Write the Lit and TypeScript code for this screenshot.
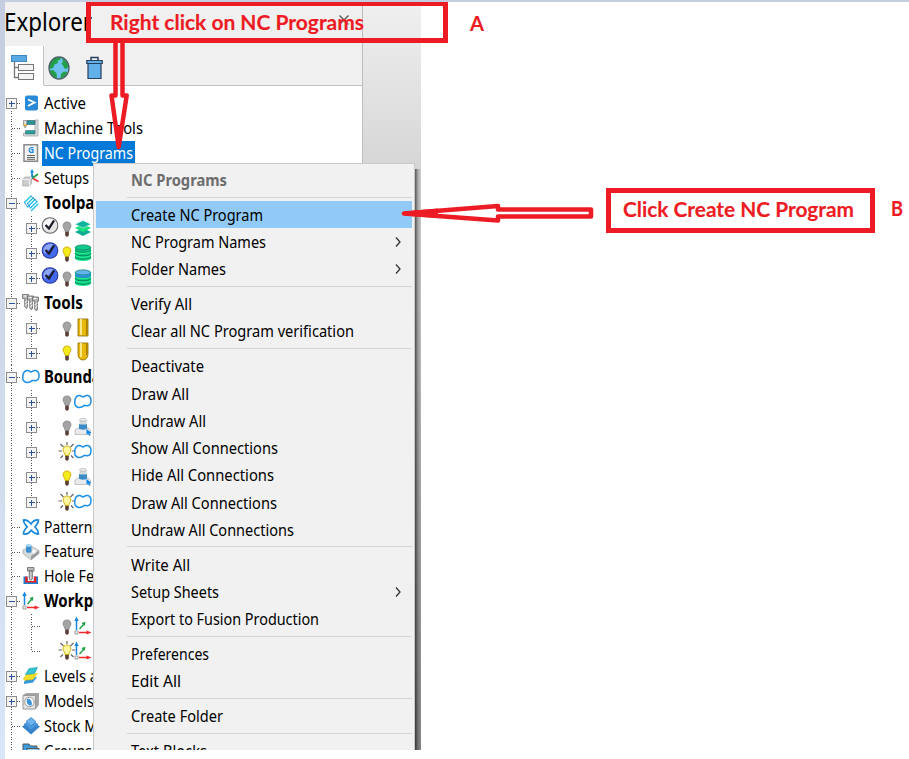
import { LitElement, html, svg, css, nothing } from "lit";
import { customElement } from "lit/decorators.js";

type Opt = { size?: number; bold?: boolean; cls?: string; h?: number; base?: number };

// One line of text condensed to an exact advance width.
const label = (s: string, w: number, o: Opt = {}) => {
  const h = o.h ?? 24;
  return html`<svg class="txt ${o.cls ?? ""}" width=${w} height=${h} viewBox="0 0 ${w} ${h}">
    <text x="0" y=${o.base ?? 18} font-size=${o.size ?? 17} font-weight=${o.bold ? 700 : 400}
      textLength=${w} lengthAdjust="spacingAndGlyphs">${s}</text></svg>`;
};

const cloud = svg`<path d="M4.500 14.500C1.800 14 .5 11.500.8 8.500 1 5 2.500 2.800 5 2.500c1.800-.2 2.600.9 4 1.600C10.500 3.200 11.800 2 13.700 2.500c1.800.5 3.400 2.200 3.300 5 0 2.800-1.300 4.900-3.200 5.200-1.500.2-2.400-.6-3.600-.2-1.500.6-2.700 2.500-5.700 2z" fill="#fff" stroke="#1d8fe8" stroke-width="1.500"/>`;
const axes = svg`<path d="M2.500 13V3" stroke="#1787e0" stroke-width="1.500"/><path d="M.3 4L2.500-.5l2.200 4.500z" fill="#1787e0"/><path d="M5 15.500h9" stroke="#f02a2a" stroke-width="1.500"/><path d="M12.500 13.500l5 2-5 2z" fill="#f02a2a"/><path d="M5.500 12l4.500-5" stroke="#1fa045" stroke-width="1.400"/><path d="M7.500 6l4-1.300-.8 4.300z" fill="#1fa045"/><rect x="1" y="14" width="3" height="3" fill="#eee" stroke="#999" stroke-width=".9"/>`;
const cutter = (x: number, y: number) => svg`<g transform="translate(${x} ${y})"><path d="M0 0h6v4H5v8L4 14 2.200 12V4H0z" fill="#b5b5b5" stroke="#666" stroke-width=".8"/><path d="M1 1.500h3M2.500 8l2.500-2M2.500 11l2.500-2" stroke="#fff"/></g>`;
const db = (top: string) => svg`<path d="M1 3v11c0 3.500 16 3.500 16 0V3z" fill="#0fc97d"/><g fill="none" stroke="#06845f" stroke-width="1"><path d="M1 6c1 3 15 3 16 0M1 9.500c1 3 15 3 16 0M1 13c1 3 15 3 16 0"/></g><g fill="none" stroke="#24f49a"><path d="M1 7.200c1 3 15 3 16 0M1 11c1 3 15 3 16 0M1 14.200c1 3 15 3 16 0"/></g><ellipse cx="9" cy="3.500" rx="7.700" ry="2.600" fill=${top} stroke="#087f68" stroke-width=".8"/>`;

const ICONS: Record<string, unknown> = {
  active: svg`<rect x="3" y="1.500" width="13" height="15" rx="2" fill="#2b8ad8"/><path d="M6 5.500l6.500 3L6 12" fill="none" stroke="#fff" stroke-width="1.900"/>`,
  machine: svg`<path d="M13 1h3v16H1.500v-3H13z" fill="#dadcdc" stroke="#9aa" stroke-width=".8"/><path d="M5 1.500h8v4H5z" fill="#28968f" stroke="#246" stroke-width=".5"/><path d="M3.500 11.500H13v3.500H3.500z" fill="#2ba098" stroke="#246" stroke-width=".4"/><path d="M1.500 1.500h3.200V6L3.200 9 1.500 6z" fill="#ddd" stroke="#888" stroke-width=".8"/><path d="M1.500 5.500h3v1.500h-3z" fill="#e6a817"/>`,
  nc: svg`<rect x="2" y=".8" width="13.500" height="16.500" fill="#f3f3f3" stroke="#888" stroke-width="1.500"/><text x="6" y="9" font-size="8.500" font-weight="700" fill="#1787e0">G</text><path d="M5 11.500h8M5 13.500h8M5 15.300h8" stroke="#555" stroke-width=".9"/>`,
  setups: svg`<path d="M10 9.500l6-4.500M10 5l1 4" stroke-width="1.600" stroke="#1fa045"/><path d="M10 9V2" stroke="#1787e0" stroke-width="1.600"/><path d="M8 3.500L10 0l2 3.500z" fill="#1787e0"/><path d="M11 9.500l5.500 3" stroke="#e33" stroke-width="1.700"/><path d="M.8 10.500l2-2.500H9.500v6.500l-2 2.500H.8z" fill="#cdcdcd" stroke="#a5a5a5" stroke-width=".7"/><path d="M.8 10.500h6.700V17M7.500 10.500l2-2.500" fill="none" stroke="#eee"/>`,
  toolpaths: svg`<g stroke="#25c0e8" stroke-width="1.400" fill="none" stroke-linecap="round"><path d="M2.500 8.500L9 2M5.500 9.500L11 4M5.500 13L13 5.500M8.500 14L15 7.500M9.500 16.500L16 10"/></g><g stroke="#1e8fd6" stroke-width=".9" fill="none"><path d="M2.500 8.500l3 4.500M5.500 9.500l3 4.500M9 2l4 3.500M11 4l4 3.500"/></g>`,
  tools: svg`${cutter(.5, .5)}${cutter(5.500, 2)}${cutter(10.500, 3)}`,
  cloud,
  pattern: svg`<path d="M1.500 2c3.200-.5 4.800.7 7.500 4 2-3 4-4.500 7.500-4 .2 3-1.800 4.500-3.500 7 1.900 2 3.600 3.500 3.500 7-3.200.3-4.900-1-7.300-3.700C7.500 15 5 16.500 1.500 16c-.3-3 1.700-5 3.700-7C3.200 6.800 1.500 5.500 1.500 2z" fill="#fff" stroke="#1787e0" stroke-width="1.700"/>`,
  feature: svg`<path d="M1 7l8-4 8 4.500v3L9 17l-8-6.500z" fill="#d6d9da" stroke="#a5a5a5" stroke-width=".7"/><path d="M9 13l8-5.500v3L9 17z" fill="#989c9e"/><path d="M4 2.500v6c0 1.800 5.500 1.800 5.500 0v-6z" fill="#3c8fd0"/><ellipse cx="6.750" cy="2.500" rx="2.750" ry="1.500" fill="#9cd0f2"/><circle cx="12" cy="8.500" r="2" fill="#f8f8f8"/>`,
  hole: svg`<path d="M1.500 9.500h14.500V17H1.500z" fill="#1d7fd0"/><path d="M5.500 9.500h6.500l-.5 5h-5.500z" fill="#fff"/><path d="M3.200 9.500h2.300V14h6.500V9.500h2.300v6H3.200z" fill="#e22"/><path d="M5.500 .5h6.500v3.500H5.500z" fill="#bbb" stroke="#666" stroke-width=".8"/><path d="M7.300 4h3v8l-1.500 1.500L7.300 12z" fill="#ccc" stroke="#555" stroke-width=".8"/>`,
  axes,
  levels: svg`<path d="M2 15l3-4 10-1-4 5.500L2 17z" fill="#3598d8"/><path d="M1.500 11.500l3-4L15.500 6.500l-4.500 6-9 .8z" fill="#f3df2a" stroke="#d8b800" stroke-width=".5"/><path d="M4 6.500L7 1.500 15.500.5l-3 6-9 1z" fill="#35c4d2" stroke="#1697ae" stroke-width=".6"/>`,
  models: svg`<path d="M1 3l3-2h13v12l-3 4H1z" fill="#a5a5a5"/><path d="M1 3.500h12.500V17H1z" fill="#e2e2e2" stroke="#999"/><circle cx="7.500" cy="10" r="4.700" fill="#fff" stroke="#999"/><path d="M5 7c3-1 6 3 4.500 6.500C6 14 4 11 5 7z" fill="#3c93d6"/>`,
  stock: svg`<path d="M9 4l9 5.500-9 8-9-8z" fill="#3683c9"/><path d="M9 2.500l7 5L9 13 2 7.500z" fill="#4c9ade" stroke="#2f7ec4" stroke-width=".7"/><path d="M9 .5l5 4-5 4.500-5-4.500z" fill="#6db3ee" stroke="#3584ca" stroke-width=".7"/>`,
  groups: svg`<path d="M1 2h6l1.500 2H15v12H1z" fill="#3d9be0" stroke="#555"/><path d="M5 6.500h12V16H5z" fill="#9fd0f5" stroke="#555"/>`,
  layers: svg`<path d="M9 9l8 4-8 4L1 13z" fill="#0fae94"/><path d="M9 5l8 4-8 4-8-4z" fill="#15e07c"/><path d="M9 1.500l8 3.700L9 9 1 5.200z" fill="#0fb49c" stroke="#fff" stroke-width=".5"/>`,
  dbGreen: db("#13c98b"),
  dbBlue: svg`${db("#63b5ee")}<path d="M1.300 4v3c1 2.500 14.400 2.500 15.400 0V4c-2 3-13.400 3-15.400 0z" fill="#2d8fd8"/>`,
  endmill: svg`<path d="M4 0h10v17H4z" fill="#e8b90c" stroke="#8a6a00" stroke-width=".8"/><path d="M6 0h2v16H6z" fill="#fbe88a"/><path d="M12 0h1.500v16H12z" fill="#a87c00"/>`,
  ballmill: svg`<path d="M4 0h10v11c0 8-10 8-10 0z" fill="#e8b90c" stroke="#8a6a00" stroke-width=".8"/><path d="M6 0h2v14H6z" fill="#fbe88a"/><path d="M12 0h1.500v12H12z" fill="#a87c00"/>`,
  block: svg`<path d="M1 12l3-2h10l2.500 2v4.500H1z" fill="#e8eaec" stroke="#b5b5b5" stroke-width=".8"/><path d="M5 6v4.500c0 1.500 8 1.500 8 0V6z" fill="#3a8cc9"/><path d="M5.500 2v4.500h7V2z" fill="#d4d8da"/><ellipse cx="9" cy="1.800" rx="3.500" ry="1.400" fill="#eef0f1" stroke="#aaa" stroke-width=".6"/><path d="M12.500 11l5 4-2.200.2 1.200 2.200-1.300.4-1.200-2.200-1.500 1.200z" fill="#0b84e6"/>`,
};
const icon = (n: string, cls = "ico") => html`<svg class=${cls} width="18" height="18" viewBox="0 0 18 18">${ICONS[n]}</svg>`;

const bulb = (kind: string) => html`<svg class="bulb" width="18" height="20" viewBox="0 0 18 20">
  ${kind === "rays" ? svg`<g stroke="#666" stroke-width="1.200"><path d="M9 0v3M2.500 2l3 3M15.500 2L12.500 5M.5 9h3.500M14 9h3.500M2.500 16L5 13.500M15.500 16L13 13.500"/></g>` : nothing}
  <path d="M7.200 12h3.600v5.500L9 19l-1.800-1.500z" fill="#5a3d35"/>
  <path d="M9 4c2.400 0 3.900 1.500 3.900 3.800S11 11 10.800 13.500H7.200C7 11 5.100 10.100 5.100 7.800S6.600 4 9 4z" fill=${kind === "off" ? "#a3a3a3" : kind === "on" ? "#f5ea1c" : "#fff7a0"} stroke=${kind === "off" ? "#868686" : "#c9a800"} stroke-width=".9"/></svg>`;

const check = (on: boolean) => html`<svg class="chk" width="18" height="20" viewBox="0 0 18 20">
  <circle cx="9" cy="8.500" r="7.800" fill=${on ? "#4468ee" : "#e6e6e6"} stroke=${on ? "#26379a" : "#666"} stroke-width="1.100"/>
  <path d="M2.500 9.500a7 7 0 0 1 10-7L4 12z" fill="#fff" opacity=${on ? ".4" : ".8"}/>
  <path d="M4.500 8L8 11.500l5-8" fill="none" stroke="#1b1b2a" stroke-width="2.300"/></svg>`;

interface Row { t?: string; w?: number; i: string; b?: boolean; x?: "+" | "-"; child?: boolean; last?: boolean; bulb?: string; chk?: boolean; sel?: boolean; short?: boolean }
const ROWS: Row[] = [
  { t: "Active", w: 42, i: "active", x: "+" },
  { t: "Machine Tools", w: 99, i: "machine" },
  { t: "NC Programs", w: 89, i: "nc", sel: true },
  { t: "Setups", w: 45, i: "setups" },
  { t: "Toolpaths", w: 75, i: "toolpaths", b: true, x: "-" },
  { i: "layers", child: true, x: "+", bulb: "off", chk: false },
  { i: "dbGreen", child: true, x: "+", bulb: "on", chk: true },
  { i: "dbBlue", child: true, x: "+", bulb: "off", chk: true, last: true },
  { t: "Tools", w: 39, i: "tools", b: true, x: "-" },
  { i: "endmill", child: true, x: "+", bulb: "off" },
  { i: "ballmill", child: true, x: "+", bulb: "on", last: true, short: true },
  { t: "Boundaries", w: 84, i: "cloud", b: true, x: "-" },
  { i: "cloud", child: true, x: "+", bulb: "off" },
  { i: "block", child: true, x: "+", bulb: "off" },
  { i: "cloud", child: true, x: "+", bulb: "rays" },
  { i: "block", child: true, x: "+", bulb: "on" },
  { i: "cloud", child: true, x: "+", bulb: "rays", last: true },
  { t: "Patterns", w: 55, i: "pattern" },
  { t: "Features", w: 57, i: "feature", short: true },
  { t: "Hole Fea", w: 58, i: "hole" },
  { t: "Workplanes", w: 89, i: "axes", b: true, x: "-" },
  { i: "axes", child: true, bulb: "off" },
  { i: "axes", child: true, bulb: "rays", last: true },
  { t: "Levels an", w: 63, i: "levels", x: "+" },
  { t: "Models", w: 50, i: "models", x: "+" },
  { t: "Stock Mo", w: 62, i: "stock" },
  { t: "Groups", w: 48, i: "groups" },
];

const lines = (r: Row, first: boolean) => {
  const w = r.child ? 37 : 17, cx = r.child ? 26.5 : 6.5;
  return html`<svg class="lines" width=${w} height="25" viewBox="0 0 ${w} 25">
    <g stroke="#555" stroke-dasharray="1 1.500" fill="none">
      <path d="M6.500 ${first ? 12 : 0}V25"/>
      ${r.child ? svg`<path d="M26.500 0V${r.last ? 12 : 25}"/>` : nothing}
      <path d="M${cx} 12.500H${w}"/>
    </g>
    ${r.x ? svg`<rect x=${cx - 5} y="7.500" width="10" height="10" fill="#f4f4f4" stroke="#8d8d8d"/>
      <path d="M${cx - 3} 12.500h6${r.x === "+" ? "m-3 -3v6" : ""}" stroke="#2d4fa0" fill="none"/>` : nothing}
  </svg>`;
};

type Item = { t: string; w: number; sub?: boolean; hot?: boolean } | null;
const MENU: Item[] = [
  { t: "Create NC Program", w: 132, hot: true },
  { t: "NC Program Names", w: 135, sub: true },
  { t: "Folder Names", w: 95, sub: true },
  null,
  { t: "Verify All", w: 61 },
  { t: "Clear all NC Program verification", w: 223 },
  null,
  { t: "Deactivate", w: 73 },
  { t: "Draw All", w: 58 },
  { t: "Undraw All", w: 75 },
  { t: "Show All Connections", w: 147 },
  { t: "Hide All Connections", w: 143 },
  { t: "Draw All Connections", w: 146 },
  { t: "Undraw All Connections", w: 163 },
  null,
  { t: "Write All", w: 59 },
  { t: "Setup Sheets", w: 88, sub: true },
  { t: "Export to Fusion Production", w: 188 },
  null,
  { t: "Preferences", w: 78 },
  { t: "Edit All", w: 50 },
  null,
  { t: "Create Folder", w: 92 },
  null,
  { t: "Text Blocks", w: 76 },
];

@customElement("context-menu")
export class ContextMenu extends LitElement {
  static styles = css`
    :host { display: block; box-sizing: border-box; width: 322px; height: 600px; padding-top: 2.400px; background: #f1f1f1;
      border: 1px solid #c9c9c9; font-family: "Noto Sans", "Open Sans", sans-serif; }
    svg { display: block; overflow: visible; }
    .item { height: 27.250px; margin: 0 2px; padding-left: 35px; display: flex; align-items: center; fill: #000; }
    .hot { background: #91c9f7; }
    .title { fill: #6d6d6d; }
    .sep { height: 7.600px; padding: 3px 2px 0 33px; box-sizing: border-box; }
    .sep::before { content: ""; display: block; height: 1px; background: #d4d4d4; }
    .arrow { margin-left: auto; margin-right: 11px; }
  `;
  render() {
    return html`
      <div class="item title">${label("NC Programs", 96, { bold: true, size: 16.5 })}</div>
      <div class="sep"></div>
      ${MENU.map((m) => m
        ? html`<div class="item ${m.hot ? "hot" : ""}">${label(m.t, m.w, { base: 18.45 })}
            ${m.sub ? html`<svg class="arrow" width="6" height="12"><path d="M1 1.500l4 4.500-4 4.500" fill="none" stroke="#333" stroke-width="1.300"/></svg>` : nothing}</div>`
        : html`<div class="sep"></div>`)}`;
  }
}

@customElement("app-root")
export class AppRoot extends LitElement {
  static styles = css`
    :host { display: block; box-sizing: border-box; position: relative; width: 909px; height: 759px; overflow: hidden;
      background: #fff; font-family: "Noto Sans", "Open Sans", sans-serif; }
    svg { display: block; overflow: visible; flex: none; }
    .window { display: grid; grid-template-columns: 5px 1fr; grid-template-rows: 2px 1fr; height: 759px; }
    .top { grid-column: 1 / 3; background: #c5cee0; }
    .edge { background: linear-gradient(#c5cee0, #d9e6f7); }
    .client { display: flex; height: 748px; overflow: hidden; }
    .panel { width: 357px; border-right: 1px solid #bdbdbd; background: #fff; flex: none; }
    .back { width: 58px; background: linear-gradient(#f0f0f0, #d6d6d6 22%, #8a8a8a); flex: none; }
    .head { height: 44px; background: #f0f0f0; display: flex; justify-content: space-between; }
    .head .txt { margin-left: -1px; }
    .close { margin: 13px 13px 0 0; }
    .tabs { height: 40px; box-sizing: border-box; background: #f0f0f0; display: flex; }
    .tab { box-sizing: border-box; padding-top: 4px; display: flex; align-items: center; justify-content: center; border-bottom: 1px solid #c2c2c2; }
    .tab.on { width: 39px; padding-right: 2px; background: #fff; border-right: 1px solid #c2c2c2; border-bottom-color: #fff; }
    .tab.web { width: 29px; }
    .tab.bin { width: 43px; }
    .tab.fill { flex: 1; }
    .tree { padding-top: 5px; }
    .row { height: 25px; display: flex; align-items: center; overflow: hidden; }
    .row.short { height: 24px; }
    .lines { align-self: flex-start; shape-rendering: crispEdges; }
    .ico { margin: -1px 2px 0 0; }
    .name { height: 24px; padding: 0 2px; }
    .name.sel { background: #0078d7; fill: #fff; height: 25px; }
    .slot { width: 18px; margin-left: -1px; }
    .chk { margin-top: -4px; margin-left: -1px; }
    .bulb { margin: -2px -2px 0 -1px; }
    .bulb + .ico { margin-top: -2px; }
    .menu { position: absolute; left: 93px; top: 163px; width: 328px; height: 587px; overflow: hidden; }
    .menu::after { content: ""; position: absolute; left: 322px; top: 6px; width: 6px; bottom: 0;
      background: linear-gradient(90deg, rgba(0,0,0,.6), rgba(0,0,0,.2) 50%, rgba(0,0,0,.01)); }
    .note, .letter { position: absolute; fill: #ed1c24; stroke: #ed1c24; stroke-width: .15px; font-family: Lato, "Open Sans", sans-serif; }
    .note { box-sizing: border-box; border: 5px solid #ed1c24; }
    .a { left: 86px; top: 2px; width: 362px; height: 41px; border-top-width: 4px; padding: 4px 0 0 19px; }
    .b { left: 606px; top: 188px; width: 269px; height: 45px; padding: 4px 0 0 12px; }
    .la { left: 470px; top: 10px; }
    .lb { left: 891px; top: 195px; }
    .arrows { position: absolute; left: 0; top: 0; pointer-events: none; }
  `;

  private row(r: Row, i: number) {
    return html`<div class="row ${r.short ? "short" : ""}">
      ${lines(r, i === 0)}
      ${r.child
        ? html`${r.chk === undefined ? html`<span class="slot"></span>` : check(r.chk)}${bulb(r.bulb!)}${icon(r.i)}`
        : html`${icon(r.i)}<div class="name ${r.sel ? "sel" : ""}">${label(r.t!, r.w!, { bold: r.b, base: r.sel ? 18 : 16.9 })}</div>`}
    </div>`;
  }

  render() {
    return html`
      <div class="window">
        <div class="top"></div>
        <div class="edge"></div>
        <div class="client">
          <div class="panel">
            <div class="head">
              ${label("Explorer", 88, { size: 26, h: 40, base: 29 })}
              <svg class="close" width="10" height="10"><path d="M.5.5l9 9M9.500.5l-9 9" stroke="#555" stroke-width="1.400"/></svg>
            </div>
            <div class="tabs">
              <div class="tab on"><svg width="24" height="26" viewBox="0 0 24 26">
                <path d="M3.500 7v15.500H8M3.500 12.500H8" fill="none" stroke="#777" stroke-width="1.300"/>
                <rect x=".5" y=".5" width="15" height="6" fill="#5ba9e2" stroke="#3f88bf"/>
                <rect x="7.500" y="9.500" width="15" height="6" fill="#f5f5f5" stroke="#777"/>
                <rect x="7.500" y="18.500" width="15" height="6" fill="#f5f5f5" stroke="#777"/></svg></div>
              <div class="tab web"><svg width="22" height="24" viewBox="0 0 22 24">
                <ellipse cx="11" cy="12" rx="10" ry="11" fill="#6fc1ef"/>
                <path d="M5 3c2-1.500 5-2 8-1.500L12 4 9.500 4.500 10 7 6.500 8.500 5 12 2 13 1 12C1 8 2.500 5 5 3zM14 2.500c4 1.500 6 5 6.500 8.500L18 13l-2-1-1-3-2-1 2-2zM1.500 14.500L5 14l3.500 3L9 22C5 21.500 2 18 1.500 14.500zM13 18l3-2.500 3.500.5c-1.500 3-4 5.500-7 6.500z" fill="#22a048"/>
                <ellipse cx="11" cy="12" rx="10" ry="11" fill="none" stroke="#4c5f66" stroke-width="1.300"/></svg></div>
              <div class="tab bin"><svg width="17" height="24" viewBox="0 0 17 24">
                <path d="M2 7.500h13v15H2z" fill="#62b0ea" stroke="#27405c" stroke-width="1.200"/>
                <path d="M.8 4.500h15.400v3H.8z" fill="#62b0ea" stroke="#27405c" stroke-width="1.200"/>
                <path d="M5 4V1.500h7V4" fill="none" stroke="#27405c" stroke-width="1.500"/></svg></div>
              <div class="tab fill"></div>
            </div>
            <div class="tree">${ROWS.map((r, i) => this.row(r, i))}</div>
          </div>
          <div class="back"></div>
        </div>
      </div>
      <div class="menu"><context-menu></context-menu></div>
      <div class="note a">${label("Right click on NC Programs", 254, { bold: true, size: 20.5, h: 24, base: 20 })}</div>
      <div class="letter la">${label("A", 14, { bold: true, size: 20.5, base: 21 })}</div>
      <div class="note b">${label("Click Create NC Program", 231, { bold: true, size: 20.5, h: 24, base: 20 })}</div>
      <div class="letter lb">${label("B", 12, { bold: true, size: 20.5, base: 21 })}</div>
      <svg class="arrows" width="909" height="759" viewBox="0 0 909 759" fill="none" stroke="#ed1c24" stroke-linejoin="round">
        <path stroke-width="4.500" d="M115.500 41V95.500H111.500L118.700 147L126.700 95.500H122.500V41"/>
        <path fill="#ed1c24" stroke="none" d="M114.500 126h8.500l-3.300 22h-2z"/>
        <path stroke-width="4.500" d="M591 209.500H498V206L404 213.500L498 220.500V216.500H591Z"/>
        <path fill="#ed1c24" stroke="none" d="M404 211.500l34-3v9.500l-34-2.500z"/>
      </svg>`;
  }
}
